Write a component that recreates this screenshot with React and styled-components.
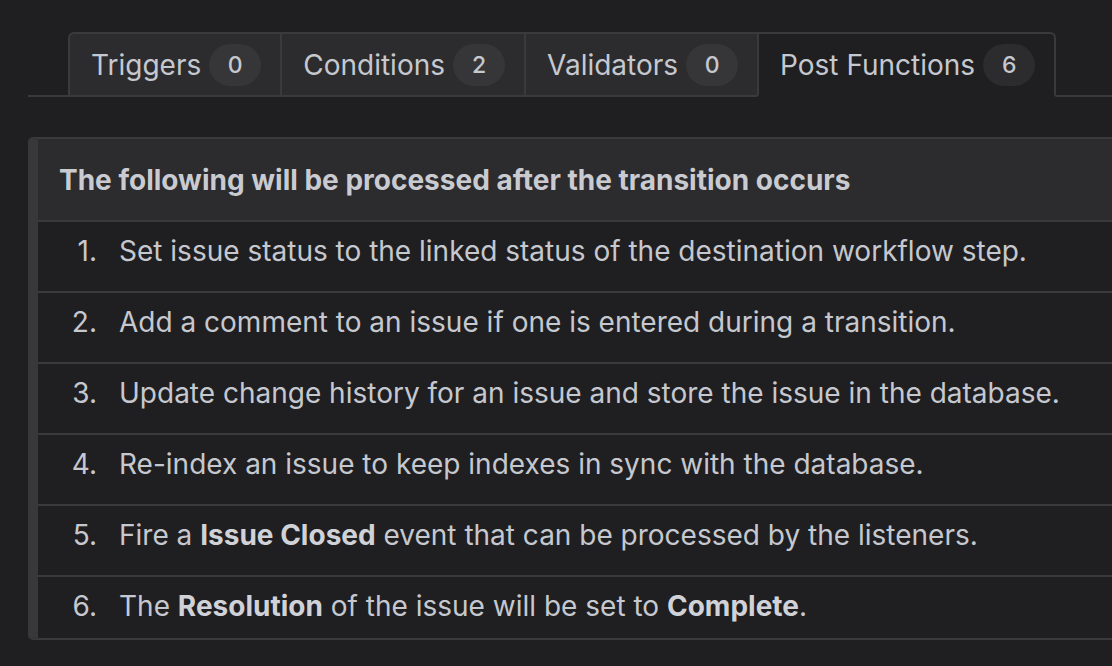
import React from "react";
import styled, { createGlobalStyle } from "styled-components";

const Global = createGlobalStyle`
  html, body { margin: 0; padding: 0; background: #1f1f21; overflow: hidden; }
  body { font-family: Inter, "Noto Sans", sans-serif; color: #c6c8cf; }
`;

const Page = styled.div`
  padding: 32px 0 0 28px;
`;

const TabBar = styled.div`
  display: flex;
  padding-left: 40px;
  border-bottom: 2px solid #3a3a3c;
  height: 63px;
`;

const Tab = styled.div`
  display: flex;
  align-items: center;
  gap: 8px;
  box-sizing: border-box;
  height: 65px;
  padding: 1px 19px 0 21px;
  margin-left: ${(p) => (p.$first ? "0" : "-2px")};
  background: ${(p) => (p.$active ? "#1f1f21" : "#2c2c2e")};
  border: 2px solid #3a3a3c;
  border-bottom-color: ${(p) => (p.$active ? "#1f1f21" : "#3a3a3c")};
  border-radius: ${(p) => (p.$first ? "6px 0 0 0" : p.$active ? "0 6px 0 0" : "0")};
  position: relative;
  z-index: ${(p) => (p.$active ? 1 : 0)};
  font-size: 28px;
  color: #c6c8cf;
`;

const Badge = styled.span`
  display: inline-flex;
  align-items: center;
  justify-content: center;
  width: 52px;
  height: 42px;
  border-radius: 21px;
  background: ${(p) => (p.$active ? "#2c2c2e" : "#363638")};
  font-size: 23px;
  font-weight: 500;
  color: #c6c8cf;
`;

const Panel = styled.div`
  margin-top: 40px;
  border: 2px solid #3a3a3c;
  border-left: 10px solid #38383a;
  border-right: none;
  border-radius: 5px 0 0 5px;
  overflow: hidden;
`;

const Header = styled.div`
  height: 81px;
  display: flex;
  align-items: center;
  padding-left: 21px;
  background: #2c2c2e;
  font-size: 28px;
  font-weight: 700;
  color: #c9cbd1;
  border-bottom: 2px solid #3a3a3c;
`;

const Row = styled.div`
  display: grid;
  grid-template-columns: 59px 1fr;
  column-gap: 22px;
  align-items: start;
  box-sizing: border-box;
  padding-top: 12px;
  height: ${(p) => (p.$last ? "61px" : "71px")};
  border-bottom: ${(p) => (p.$last ? "none" : "2px solid #3a3a3c")};
  font-size: 28px;
  white-space: nowrap;
`;

const Num = styled.span`
  text-align: right;
`;

const B = styled.b`
  font-weight: 700;
  color: #d0d2d8;
`;

const tabs = [
  { label: "Triggers", count: 0 },
  { label: "Conditions", count: 2 },
  { label: "Validators", count: 0 },
  { label: "Post Functions", count: 6, active: true },
];

const items = [
  <>Set issue status to the linked status of the destination workflow step.</>,
  <>Add a comment to an issue if one is entered during a transition.</>,
  <>Update change history for an issue and store the issue in the database.</>,
  <>Re-index an issue to keep indexes in sync with the database.</>,
  <>Fire a <B>Issue Closed</B> event that can be processed by the listeners.</>,
  <>The <B>Resolution</B> of the issue will be set to <B>Complete</B>.</>,
];

export default function App() {
  return (
    <>
      <Global />
      <Page>
        <TabBar>
          {tabs.map((t, i) => (
            <Tab key={t.label} $first={i === 0} $active={t.active}>
              {t.label}
              <Badge $active={t.active}>{t.count}</Badge>
            </Tab>
          ))}
        </TabBar>
        <Panel>
          <Header>The following will be processed after the transition occurs</Header>
          {items.map((content, i) => (
            <Row key={i} $last={i === items.length - 1}>
              <Num>{i + 1}.</Num>
              <span>{content}</span>
            </Row>
          ))}
        </Panel>
      </Page>
    </>
  );
}
